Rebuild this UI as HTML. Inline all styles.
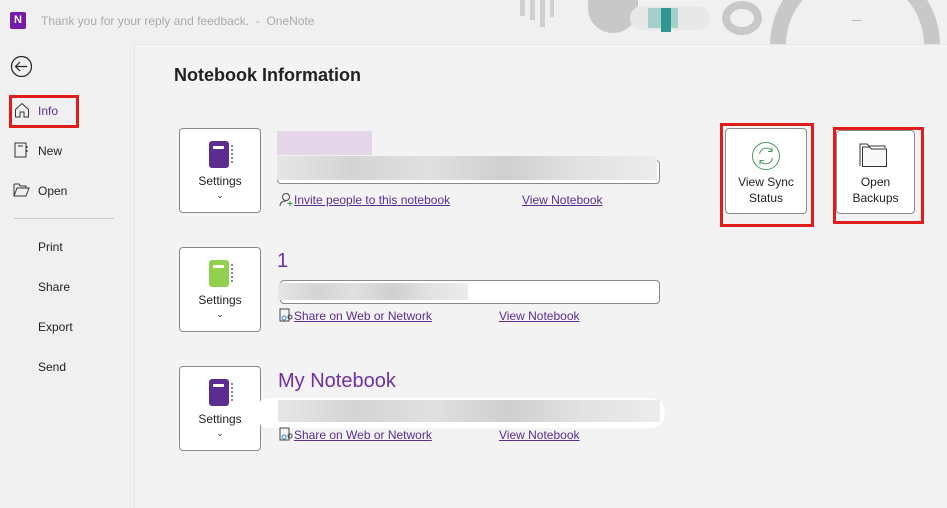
<!DOCTYPE html>
<html><head><style>
*{margin:0;padding:0;box-sizing:border-box}
body{width:947px;height:508px;overflow:hidden;background:#f0f0f0;font-family:"Liberation Sans",sans-serif;position:relative;font-size:12px;color:#222}
.a{position:absolute}
.main{left:134px;top:44px;width:813px;height:464px;background:#f3f3f3;border-top:1px solid #e6e6e6;border-left:1px solid #e6e6e6}
.nav{left:38px;font-size:12px;color:#222}
.sbox{width:82px;height:85px;background:#fff;border:1px solid #8a8a8a;border-radius:4px}
.sbox .lbl{position:absolute;left:0;right:0;top:45px;text-align:center;font-size:12px}
.sbox .chev{position:absolute;left:0;right:0;top:61px;text-align:center;font-size:9px;color:#333}
.nb{position:absolute;left:29px;top:12px;width:20px;height:27px;border-radius:3px}
.nb:before{content:"";position:absolute;left:4px;top:5px;width:11px;height:3px;background:#fff;border-radius:1px}
.nb:after{content:"";position:absolute;right:-4px;top:4px;width:2px;height:18px;background:repeating-linear-gradient(#888 0 2px,transparent 2px 4px)}
.field{height:24px;background:#fff;border:1px solid #8a8a8a;border-radius:4px}
.blur{background:linear-gradient(90deg,#e6e6e6,#d4d4d4 20%,#e0e0e0 40%,#cfcfcf 60%,#e2e2e2 80%,#ececec)}
.lnk{color:#5c2d91;text-decoration:underline;font-size:12px}
.red{border:3px solid #e01c1c}
.btn{background:#fff;border:1px solid #8a8a8a;border-radius:4px;text-align:center;font-size:12px;line-height:16px}
</style></head><body>
<!-- title bar -->
<div class="a" style="left:10px;top:12px;width:16px;height:17px;background:#7719aa;border-radius:2px;color:#fff;font-weight:bold;font-size:11px;line-height:17px;text-align:center">N</div>
<div class="a" style="left:41px;top:14px;color:#aaa;font-size:12px">Thank you for your reply and feedback.&nbsp; - &nbsp;OneNote</div>
<div class="a" style="left:520px;top:0;width:5px;height:16px;background:#d0d0d0"></div>
<div class="a" style="left:530px;top:0;width:5px;height:20px;background:#d0d0d0"></div>
<div class="a" style="left:540px;top:0;width:5px;height:27px;background:#cfcfcf"></div>
<div class="a" style="left:550px;top:0;width:4px;height:17px;background:#d0d0d0"></div>
<div class="a" style="left:588px;top:0;width:50px;height:33px;background:#c8c8c8;border-radius:0 0 25px 25px"></div>
<div class="a" style="left:630px;top:6px;width:80px;height:24px;background:#e8e8e8;border-radius:12px"></div>
<div class="a" style="left:648px;top:8px;width:30px;height:20px;background:#a6cfcc"></div>
<div class="a" style="left:661px;top:8px;width:10px;height:24px;background:#2d9892"></div>
<div class="a" style="left:722px;top:1px;width:40px;height:34px;border:8px solid #c8c8c8;border-radius:50%"></div>
<div class="a" style="left:770px;top:-40px;width:170px;height:170px;border:16px solid #c8c8c8;border-radius:50%"></div>
<div class="a" style="left:852px;top:20px;width:10px;height:1px;background:#bbb"></div>
<!-- sidebar -->
<svg class="a" style="left:10px;top:55px" width="23" height="23" viewBox="0 0 23 23"><circle cx="11.5" cy="11.5" r="10" fill="none" stroke="#222" stroke-width="1.2"/><path d="M17 11.5H6M10 7l-4.5 4.5L10 16" fill="none" stroke="#222" stroke-width="1.2"/></svg>
<div class="a red" style="left:9px;top:95px;width:70px;height:33px"></div>
<svg class="a" style="left:14px;top:102px" width="16" height="16" viewBox="0 0 16 16"><path d="M1.5 7.5L8 1.5l6.5 6V15h-4.5v-5h-4v5H1.5z" fill="none" stroke="#333" stroke-width="1"/></svg>
<div class="a nav" style="top:104px;color:#5c2d91">Info</div>
<svg class="a" style="left:14px;top:142px" width="14" height="16" viewBox="0 0 14 16"><rect x="1" y="1" width="11" height="14" fill="none" stroke="#333"/><path d="M4 4h5M13 4v2M13 8v2" stroke="#333"/></svg>
<div class="a nav" style="top:144px">New</div>
<svg class="a" style="left:13px;top:183px" width="17" height="14" viewBox="0 0 17 14"><path d="M1 1h5l1 2h6v2M1 1v12h12l3-8H4L1 13" fill="none" stroke="#333"/></svg>
<div class="a nav" style="top:184px">Open</div>
<div class="a" style="left:14px;top:218px;width:100px;height:1px;background:#ccc"></div>
<div class="a nav" style="top:240px">Print</div>
<div class="a nav" style="top:280px">Share</div>
<div class="a nav" style="top:320px">Export</div>
<div class="a nav" style="top:360px">Send</div>
<!-- main -->
<div class="a main"></div>
<div class="a" style="left:174px;top:65px;font-size:18px;font-weight:bold;color:#222">Notebook Information</div>

<div class="a sbox" style="left:179px;top:128px"><div class="nb" style="background:#5c2d91"></div><div class="lbl">Settings</div><div class="chev">⌄</div></div>
<div class="a" style="left:277px;top:131px;width:95px;height:24px;background:#e2d6e8"></div>
<div class="a field" style="left:277px;top:160px;width:383px"></div>
<div class="a blur" style="left:277px;top:156px;width:380px;height:24px"></div>
<svg class="a" style="left:279px;top:192px" width="15" height="15" viewBox="0 0 15 15"><circle cx="7" cy="5" r="3.5" fill="none" stroke="#444"/><path d="M1 14c0-4 3-5 6-5" fill="none" stroke="#444"/><path d="M11 9v5M8.5 11.5h5" stroke="#2a9a3a"/></svg>
<div class="a lnk" style="left:294px;top:193px">Invite people to this notebook</div>
<div class="a lnk" style="left:522px;top:193px">View Notebook</div>

<div class="a sbox" style="left:179px;top:247px"><div class="nb" style="background:#92d050"></div><div class="lbl">Settings</div><div class="chev">⌄</div></div>
<div class="a" style="left:277px;top:250px;font-size:20px;color:#7030a0">1</div>
<div class="a field" style="left:280px;top:280px;width:380px"></div>
<div class="a blur" style="left:278px;top:283px;width:190px;height:17px"></div>
<svg class="a" style="left:279px;top:308px" width="15" height="16" viewBox="0 0 15 16"><rect x="1" y="1" width="9" height="12" fill="none" stroke="#444"/><circle cx="5" cy="10" r="2" fill="none" stroke="#3a8ad0"/><circle cx="11" cy="9" r="2" fill="none" stroke="#444"/></svg>
<div class="a lnk" style="left:294px;top:309px">Share on Web or Network</div>
<div class="a lnk" style="left:499px;top:309px">View Notebook</div>

<div class="a sbox" style="left:179px;top:366px"><div class="nb" style="background:#5c2d91"></div><div class="lbl">Settings</div><div class="chev">⌄</div></div>
<div class="a" style="left:278px;top:370px;font-size:20px;color:#7030a0">My Notebook</div>
<div class="a" style="left:255px;top:398px;width:410px;height:30px;background:#fff;border-radius:14px"></div>
<div class="a blur" style="left:278px;top:400px;width:382px;height:22px"></div>
<svg class="a" style="left:279px;top:427px" width="15" height="16" viewBox="0 0 15 16"><rect x="1" y="1" width="9" height="12" fill="none" stroke="#444"/><circle cx="5" cy="10" r="2" fill="none" stroke="#3a8ad0"/><circle cx="11" cy="9" r="2" fill="none" stroke="#444"/></svg>
<div class="a lnk" style="left:294px;top:428px">Share on Web or Network</div>
<div class="a lnk" style="left:499px;top:428px">View Notebook</div>

<!-- right buttons -->
<div class="a red" style="left:720px;top:123px;width:94px;height:104px"></div>
<div class="a btn" style="left:725px;top:128px;width:82px;height:86px;padding-top:45px">View Sync<br>Status</div>
<svg class="a" style="left:751px;top:141px" width="30" height="30" viewBox="0 0 30 30"><circle cx="15" cy="15" r="13.5" fill="none" stroke="#4a9a5f" stroke-width="1"/><path d="M8.5 13a7 7 0 0 1 12.5-3M21 6.5v4h-4M21.5 17a7 7 0 0 1-12.5 3M9 23.5v-4h4" fill="none" stroke="#4a9a5f" stroke-width="1"/></svg>
<div class="a red" style="left:833px;top:127px;width:91px;height:97px"></div>
<div class="a btn" style="left:836px;top:130px;width:79px;height:84px;padding-top:43px">Open<br>Backups</div>
<svg class="a" style="left:859px;top:143px" width="30" height="25" viewBox="0 0 30 25"><path d="M1 23V1h7l2 2h16v2" fill="none" stroke="#333"/><path d="M3.5 23.5V4h7l2 2h15v17.5z" fill="#f8f8f8" stroke="#333"/></svg>
</body></html>
